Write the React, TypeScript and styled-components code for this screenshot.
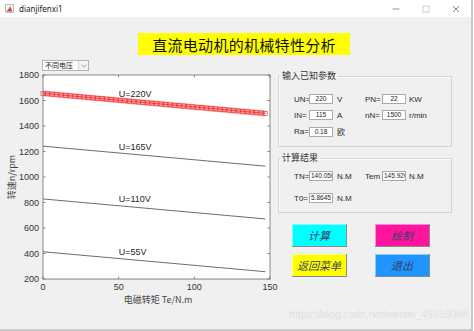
import React from "react";
import styled, { createGlobalStyle } from "styled-components";

const Global = createGlobalStyle`
  html, body { margin: 0; padding: 0; background: #ffffff; }
  body { width: 474px; height: 331px; overflow: hidden; font-family: "Liberation Sans", Arial, sans-serif; }
  * { box-sizing: border-box; }
`;

const CJK = `"Noto Sans CJK SC", "Liberation Sans", sans-serif`;

const Window = styled.div`
  width: 473px;
  height: 331px;
  border-right: 2px solid #c9c9c9;
  border-bottom: 2px solid #c9c9c9;
  background: #f0f0f0;
  display: flex;
  flex-direction: column;
`;

const TitleBar = styled.div`
  height: 17px;
  background: #ffffff;
  display: flex;
  align-items: center;
  padding-left: 5px;
`;

const AppIcon = styled.svg`
  width: 9px;
  height: 9px;
  flex: none;
`;

const WindowTitle = styled.span`
  margin-left: 5px;
  font-family: "Noto Sans", "Liberation Sans", sans-serif;
  font-size: 8px;
  color: #1a1a1a;
`;

const Controls = styled.div`
  margin-left: auto;
  display: flex;
  height: 100%;
`;

const CtrlButton = styled.div`
  width: 30px;
  height: 100%;
  display: flex;
  align-items: center;
  justify-content: center;
`;

const Body = styled.div`
  flex: 1;
  display: flex;
  flex-direction: column;
`;

const Heading = styled.div`
  margin: 16px 0 0 138px;
  width: 212px;
  height: 22px;
  background: #ffff00;
  display: flex;
  align-items: center;
  justify-content: center;
  font-family: ${CJK};
  font-size: 15px;
  letter-spacing: 0.3px;
  color: #111;
`;

const Main = styled.div`
  margin-top: 5px;
  display: flex;
`;

const LeftCol = styled.div`
  width: 278px;
  display: flex;
  flex-direction: column;
`;

const Select = styled.div`
  margin-left: 42px;
  width: 47px;
  height: 11px;
  background: #fff;
  border: 1px solid #b4b4b4;
  display: flex;
  align-items: center;
  font-family: ${CJK};
  font-size: 7px;
  color: #222;
`;

const SelectText = styled.span`
  flex: 1;
  padding-left: 2px;
  line-height: 9px;
`;

const SelectArrow = styled.span`
  width: 10px;
  height: 100%;
  display: flex;
  align-items: center;
  justify-content: center;
  background: #f4f4f4;
  border-left: 1px solid #d8d8d8;
`;

const Chart = styled.svg`
  display: block;
`;

const RightCol = styled.div`
  width: 193px;
  padding-top: 11px;
  display: flex;
  flex-direction: column;
`;

const Panel = styled.fieldset<{ $gap: number; $top: number; $bottom: number; $mt?: number }>`
  margin: ${(p) => p.$mt ?? 0}px 0 0 0;
  width: 174px;
  padding: 0 0 ${(p) => p.$bottom}px 0;
  border: 1px solid #d4d4d4;
  box-shadow: inset 1px 1px 0 #fbfbfb;
  display: flex;
  flex-direction: column;
  gap: ${(p) => p.$gap}px;
  & > div:first-of-type {
    margin-top: ${(p) => p.$top}px;
  }
`;

const Legend = styled.legend`
  margin-left: 1px;
  padding: 0 2px;
  font-family: ${CJK};
  font-size: 9px;
  line-height: 10px;
  color: #333;
`;

const FieldRow = styled.div`
  display: grid;
  grid-template-columns: 15px 24px 4px 28px 17px 24px 3px auto;
  align-items: center;
  height: 10px;
  padding-left: 15px;
  font-size: 8px;
  color: #2a2a2a;
`;

const Label = styled.span`
  font-family: "Liberation Sans", Arial, sans-serif;
  white-space: nowrap;
`;

const Unit = styled.span<{ $cjk?: boolean }>`
  font-family: ${(p) => (p.$cjk ? CJK : `"Liberation Sans", Arial, sans-serif`)};
  font-size: 8px;
  white-space: nowrap;
`;

const Box = styled.div<{ $left?: boolean }>`
  height: 10px;
  background: #fff;
  border: 1px solid #a9a9a9;
  font-family: "Liberation Sans", Arial, sans-serif;
  font-size: 6.5px;
  line-height: 8px;
  color: #222;
  white-space: nowrap;
  overflow: hidden;
  text-align: ${(p) => (p.$left ? "left" : "center")};
  padding-left: ${(p) => (p.$left ? 1 : 0)}px;
`;

const ButtonGrid = styled.div`
  margin: 11px 0 0 14px;
  display: grid;
  grid-template-columns: 55px 55px;
  column-gap: 28px;
  row-gap: 7px;
`;

const ActionButton = styled.div<{ $bg: string }>`
  height: 23px;
  background: ${(p) => p.$bg};
  border-right: 1px solid #8a8a8a;
  border-bottom: 1px solid #8a8a8a;
  box-shadow: inset 1px 1px 0 rgba(255, 255, 255, 0.5);
  display: flex;
  align-items: center;
  justify-content: center;
  font-family: ${CJK};
  font-style: italic;
  font-size: 11px;
  color: #3b3b63;
`;

const Watermark = styled.div`
  margin-top: 31px;
  padding-right: 3px;
  text-align: right;
  font-family: "Liberation Sans", Arial, sans-serif;
  font-size: 10.5px;
  color: #e0e0e0;
  white-space: nowrap;
`;

// ---- chart data ----
const X0 = 43;
const X1 = 270;
const Y0 = 75;
const Y1 = 279;
const sx = (t: number) => X0 + (t * (X1 - X0)) / 150;
const sy = (n: number) => Y0 + ((1800 - n) * (Y1 - Y0)) / 1600;
const cePhi = (220 - 115 * 0.18) / 1500;
const slope = 0.18 / (9.55 * cePhi * cePhi);
const nOf = (u: number, t: number) => u / cePhi - slope * t;
const TMAX = 147;

const voltages = [220, 165, 110, 55];
const yTicks = [200, 400, 600, 800, 1000, 1200, 1400, 1600, 1800];
const xTicks = [0, 50, 100, 150];
const markers: number[] = [];
for (let t = 0; t <= TMAX; t += 3) markers.push(t);

function ChartView() {
  return (
    <Chart width={278} height={240} viewBox="0 71 278 240">
      <rect x={X0} y={Y0} width={X1 - X0} height={Y1 - Y0} fill="#ffffff" />
      {voltages.slice(1).map((u) => (
        <line
          key={u}
          x1={sx(0)}
          y1={sy(nOf(u, 0))}
          x2={sx(TMAX)}
          y2={sy(nOf(u, TMAX))}
          stroke="#5c5c5c"
          strokeWidth={0.9}
        />
      ))}
      <line
        x1={sx(0)}
        y1={sy(nOf(220, 0))}
        x2={sx(TMAX)}
        y2={sy(nOf(220, TMAX))}
        stroke="#ffa3a3"
        strokeWidth={6}
      />
      <line
        x1={sx(0)}
        y1={sy(nOf(220, 0))}
        x2={sx(TMAX)}
        y2={sy(nOf(220, TMAX))}
        stroke="#f03a3a"
        strokeWidth={0.9}
      />
      {markers.map((t) => (
        <rect
          key={t}
          x={sx(t) - 2}
          y={sy(nOf(220, t)) - 2}
          width={4}
          height={4}
          fill="none"
          stroke="#e43030"
          strokeWidth={0.6}
        />
      ))}
      {voltages.map((u) => (
        <text
          key={u}
          x={sx(50)}
          y={sy(nOf(u, 50) + 50)}
          fontFamily="Liberation Sans, Arial, sans-serif"
          fontSize={9}
          fill="#262626"
          dominantBaseline="central"
        >
          U={u}V
        </text>
      ))}
      <rect
        x={X0}
        y={Y0}
        width={X1 - X0}
        height={Y1 - Y0}
        fill="none"
        stroke="#6a6a6a"
        strokeWidth={0.8}
      />
      {yTicks.map((v) => (
        <g key={v}>
          <line x1={X0} y1={sy(v)} x2={X0 + 2.5} y2={sy(v)} stroke="#6a6a6a" strokeWidth={0.8} />
          <line x1={X1} y1={sy(v)} x2={X1 - 2.5} y2={sy(v)} stroke="#6a6a6a" strokeWidth={0.8} />
          <text
            x={39}
            y={sy(v)}
            textAnchor="end"
            dominantBaseline="central"
            fontFamily="Liberation Sans, Arial, sans-serif"
            fontSize={9}
            fill="#333"
          >
            {v}
          </text>
        </g>
      ))}
      {xTicks.map((v) => (
        <g key={v}>
          <line x1={sx(v)} y1={Y1} x2={sx(v)} y2={Y1 - 2.5} stroke="#6a6a6a" strokeWidth={0.8} />
          <line x1={sx(v)} y1={Y0} x2={sx(v)} y2={Y0 + 2.5} stroke="#6a6a6a" strokeWidth={0.8} />
          <text
            x={sx(v)}
            y={287}
            textAnchor="middle"
            dominantBaseline="central"
            fontFamily="Liberation Sans, Arial, sans-serif"
            fontSize={9}
            fill="#333"
          >
            {v}
          </text>
        </g>
      ))}
      <text
        x={158}
        y={299}
        textAnchor="middle"
        dominantBaseline="central"
        fontFamily="Noto Sans CJK SC, Liberation Sans, sans-serif"
        fontSize={9}
        fill="#444"
      >
        电磁转矩 Te/N.m
      </text>
      <text
        x={11}
        y={177}
        transform="rotate(-90 11 177)"
        textAnchor="middle"
        dominantBaseline="central"
        fontFamily="Noto Sans CJK SC, Liberation Sans, sans-serif"
        fontSize={9}
        fill="#444"
      >
        转速n/rpm
      </text>
    </Chart>
  );
}

export default function App() {
  return (
    <>
      <Global />
      <Window>
        <TitleBar>
          <AppIcon viewBox="0 0 9 9">
            <rect x="0.5" y="0.5" width="8" height="8" fill="#f4f4f4" stroke="#9a9a9a" strokeWidth="0.6" />
            <path d="M1.5 7.5 L3.5 5.5 L5 2 L6 4.5 L7.5 7.5 Z" fill="#d9431e" />
            <path d="M1.5 7.5 L3.5 5.5 L4.5 6.5 Z" fill="#2a6ab3" />
          </AppIcon>
          <WindowTitle>dianjifenxi1</WindowTitle>
          <Controls>
            <CtrlButton>
              <svg width="8" height="8" viewBox="0 0 8 8">
                <line x1="0.5" y1="4" x2="7.5" y2="4" stroke="#777" strokeWidth="0.8" />
              </svg>
            </CtrlButton>
            <CtrlButton>
              <svg width="8" height="8" viewBox="0 0 8 8">
                <rect x="1" y="1" width="6" height="6" fill="none" stroke="#c4c4c4" strokeWidth="0.8" />
              </svg>
            </CtrlButton>
            <CtrlButton>
              <svg width="8" height="8" viewBox="0 0 8 8">
                <path d="M1 1 L7 7 M7 1 L1 7" stroke="#666" strokeWidth="0.8" />
              </svg>
            </CtrlButton>
          </Controls>
        </TitleBar>
        <Body>
          <Heading>直流电动机的机械特性分析</Heading>
          <Main>
            <LeftCol>
              <Select>
                <SelectText>不同电压</SelectText>
                <SelectArrow>
                  <svg width="6" height="4" viewBox="0 0 6 4">
                    <path d="M0.5 0.8 L3 3.2 L5.5 0.8" fill="none" stroke="#888" strokeWidth="0.8" />
                  </svg>
                </SelectArrow>
              </Select>
              <ChartView />
            </LeftCol>
            <RightCol>
              <Panel $gap={6} $top={13} $bottom={10}>
                <Legend>输入已知参数</Legend>
                <FieldRow>
                  <Label>UN=</Label>
                  <Box>220</Box>
                  <span />
                  <Unit>V</Unit>
                  <Label>PN=</Label>
                  <Box>22</Box>
                  <span />
                  <Unit>KW</Unit>
                </FieldRow>
                <FieldRow>
                  <Label>IN=</Label>
                  <Box>115</Box>
                  <span />
                  <Unit>A</Unit>
                  <Label>nN=</Label>
                  <Box>1500</Box>
                  <span />
                  <Unit>r/min</Unit>
                </FieldRow>
                <FieldRow>
                  <Label>Ra=</Label>
                  <Box>0.18</Box>
                  <span />
                  <Unit $cjk>欧</Unit>
                </FieldRow>
              </Panel>
              <Panel $gap={12} $top={8} $bottom={9} $mt={6}>
                <Legend>计算结果</Legend>
                <FieldRow>
                  <Label>TN=</Label>
                  <Box $left>140.056</Box>
                  <span />
                  <Unit>N.M</Unit>
                  <Label>Tem</Label>
                  <Box $left>145.9206</Box>
                  <span />
                  <Unit>N.M</Unit>
                </FieldRow>
                <FieldRow>
                  <Label>T0=</Label>
                  <Box $left>5.8645</Box>
                  <span />
                  <Unit>N.M</Unit>
                </FieldRow>
              </Panel>
              <ButtonGrid>
                <ActionButton $bg="#00ffff">计算</ActionButton>
                <ActionButton $bg="#ff14a0">绘制</ActionButton>
                <ActionButton $bg="#ffff00">返回菜单</ActionButton>
                <ActionButton $bg="#1e95ff">退出</ActionButton>
              </ButtonGrid>
              <Watermark>https://blog.csdn.net/weixin_45659098</Watermark>
            </RightCol>
          </Main>
        </Body>
      </Window>
    </>
  );
}
